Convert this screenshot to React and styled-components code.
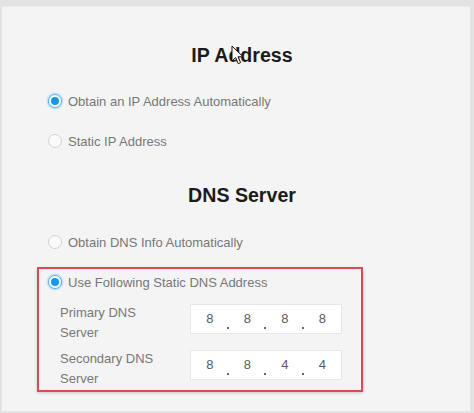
import React from "react";
import styled, { createGlobalStyle } from "styled-components";

const Global = createGlobalStyle`
  html, body { margin: 0; padding: 0; }
  body {
    background: #e3e3e3;
    padding: 6px 0 0 2px;
    font-family: "Liberation Sans", Arial, Helvetica, sans-serif;
  }
  * { box-sizing: border-box; }
`;

const Panel = styled.div`
  position: relative;
  width: 468px;
  background: #f4f4f4;
  border-top: 1px solid #ececec;
  padding: 36px 0 19px 35px;
`;

const Heading = styled.h2`
  margin: ${(p) => p.$top || 0}px 0 0;
  padding-right: 23px;
  height: 24px;
  line-height: 24px;
  font-size: 19.6px;
  font-weight: 700;
  color: #1b1b1b;
  text-align: center;
`;

const RadioRow = styled.label`
  display: flex;
  align-items: center;
  gap: 6px;
  height: ${(p) => p.$h || 40}px;
  margin-top: ${(p) => p.$top || 0}px;
  padding-left: ${(p) => p.$pl || 11}px;
  font-size: 13px;
  color: #777;
`;

const Radio = styled.span`
  position: relative;
  flex: 0 0 14px;
  width: 14px;
  height: 14px;
  border-radius: 50%;
  background: ${(p) => (p.$on ? "#fff" : "#fafafa")};
  border: 1px solid ${(p) => (p.$on ? "#4fb2f3" : "#d2d2d2")};
  box-shadow: ${(p) => (p.$on ? "0 0 0 1.5px rgba(40,160,240,0.22)" : "none")};
  &::after {
    content: "";
    display: ${(p) => (p.$on ? "block" : "none")};
    position: absolute;
    left: 2px;
    top: 2px;
    width: 8px;
    height: 8px;
    border-radius: 50%;
    background: #1597ee;
  }
`;

const Box = styled.div`
  width: 326px;
  margin-top: 5px;
  border: 2px solid #de4a4f;
  box-shadow: 0 1px 3px rgba(0, 0, 0, 0.18);
  padding-bottom: 1px;
`;

const FieldRow = styled.div`
  display: flex;
  align-items: flex-start;
  margin-top: ${(p) => p.$top}px;
  padding-left: 21px;
`;

const FieldLabel = styled.div`
  flex: 0 0 130px;
  padding-right: 25px;
  font-size: 13px;
  line-height: 20px;
  color: #777;
`;

const IpInput = styled.div`
  display: flex;
  width: 152px;
  height: 30px;
  margin-top: 1px;
  background: #fff;
  border: 1px solid #e7e7e7;
`;

const Octet = styled.span`
  flex: 1;
  text-align: center;
  line-height: 28px;
  font-size: 13px;
  color: #5a5a5a;
`;

const Dot = styled.span`
  position: relative;
  width: 0;
  &::after {
    content: "";
    position: absolute;
    left: -2px;
    bottom: 4px;
    width: 2px;
    height: 2px;
    background: #666;
  }
`;

const Cursor = styled.svg`
  position: absolute;
  left: 229px;
  top: 38px;
  width: 13px;
  height: 20px;
`;

function Ip({ value }) {
  const parts = value.split(".");
  return (
    <IpInput>
      {parts.map((p, i) => (
        <React.Fragment key={i}>
          {i > 0 && <Dot />}
          <Octet>{p}</Octet>
        </React.Fragment>
      ))}
    </IpInput>
  );
}

export default function App() {
  return (
    <>
      <Global />
      <Panel>
        <Heading>IP Address</Heading>
        <RadioRow $top={14}>
          <Radio $on />
          Obtain an IP Address Automatically
        </RadioRow>
        <RadioRow>
          <Radio />
          Static IP Address
        </RadioRow>
        <Heading $top={22}>DNS Server</Heading>
        <RadioRow $top={15}>
          <Radio />
          Obtain DNS Info Automatically
        </RadioRow>
        <Box>
          <RadioRow $h={26} $pl={9}>
            <Radio $on />
            Use Following Static DNS Address
          </RadioRow>
          <FieldRow $top={8}>
            <FieldLabel>Primary DNS Server</FieldLabel>
            <Ip value="8.8.8.8" />
          </FieldRow>
          <FieldRow $top={6}>
            <FieldLabel>Secondary DNS Server</FieldLabel>
            <Ip value="8.8.4.4" />
          </FieldRow>
        </Box>
        <Cursor viewBox="0 0 13 20">
          <path
            d="M1 1 L1 16 L4.6 12.6 L7.2 18.6 L9.6 17.6 L7 11.8 L12 11.8 Z"
            fill="#fff"
            stroke="#111"
            strokeWidth="1"
            strokeLinejoin="round"
          />
        </Cursor>
      </Panel>
    </>
  );
}
